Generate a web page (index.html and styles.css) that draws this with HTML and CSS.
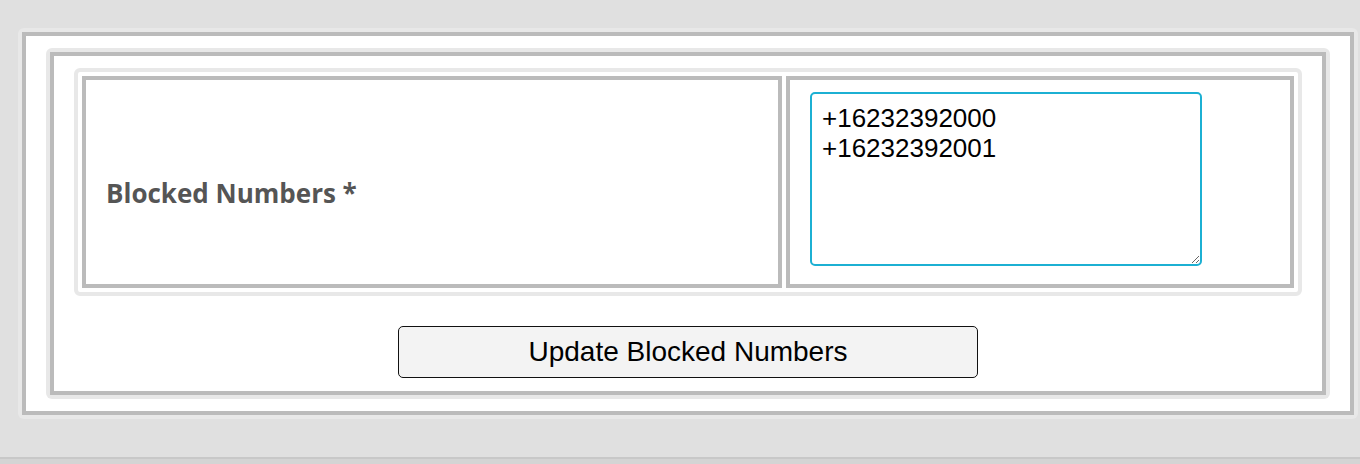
FILE: index.html
```html
<!DOCTYPE html>
<html lang="en">
<head>
    <meta charset="UTF-8">
    <meta name="viewport" content="width=device-width, initial-scale=1.0">
    <title>Blocked Numbers</title>
    <link rel="stylesheet" href="styles.css">
</head>
<body>
    <div class="frame">
        <div class="frame-inner">
            <form class="section">
                <div class="section-inner">
                    <table class="form-table">
                        <tr>
                            <td class="label-cell">
                                <label for="blockedNumbers">Blocked Numbers *</label>
                            </td>
                            <td class="field-cell">
                                <textarea id="blockedNumbers" name="blockedNumbers">+16232392000
+16232392001</textarea>
                            </td>
                        </tr>
                    </table>
                    <div class="actions">
                        <button type="button">Update Blocked Numbers</button>
                    </div>
                </div>
            </form>
        </div>
    </div>
    <div class="footer"></div>
</body>
</html>
```

FILE: styles.css
```css
body {
    margin: 0;
    padding: 28px 2px 0 18px;
    background: #e0e0e0;
    font-family: 'Liberation Sans', Arial, sans-serif;
    overflow: hidden;
}
.frame {
    padding: 4px;
    background: #e8e8e8;
    border-radius: 6px;
}
.frame-inner {
    border: 4px solid #bbb;
    background: #fff;
    padding: 12px 20px;
}
.section {
    display: block;
    margin: 0;
    padding: 4px;
    background: #e8e8e8;
    border-radius: 6px;
}
.section-inner {
    border: 4px solid #bbb;
    background: #fff;
    padding: 12px 20px 13px;
}
.form-table {
    width: 100%;
    table-layout: fixed;
    border: 4px solid #e8e8e8;
    border-radius: 6px;
    border-spacing: 4px;
}
.form-table td {
    border: 4px solid #bbb;
    padding: 0 20px;
}
.label-cell {
    width: 652px;
    vertical-align: middle;
}
.label-cell label {
    display: block;
    padding-top: 22px;
    font-family: 'Open Sans', sans-serif;
    font-weight: 700;
    font-size: 26px;
    color: #555;
}
.field-cell {
    vertical-align: top;
}
.field-cell textarea {
    display: block;
    box-sizing: border-box;
    width: 392px;
    height: 174px;
    margin: 12px 0 18px;
    padding: 9px 10px;
    border: 2px solid #1cb0d3;
    border-radius: 5px;
    font-family: 'Liberation Sans', Arial, sans-serif;
    font-size: 26px;
    line-height: 30px;
    color: #000;
    outline: none;
}
.actions {
    display: flex;
    justify-content: center;
    margin-top: 30px;
}
.actions button {
    width: 580px;
    height: 52px;
    border: 1px solid #111;
    border-radius: 5px;
    background: #f3f3f3;
    font-family: 'Liberation Sans', Arial, sans-serif;
    font-size: 28px;
    color: #000;
}
.footer {
    margin: 38px -2px 0 -18px;
    height: 6px;
    border-top: 2px solid #c8c8c8;
    background: #d4d4d4;
}
```
